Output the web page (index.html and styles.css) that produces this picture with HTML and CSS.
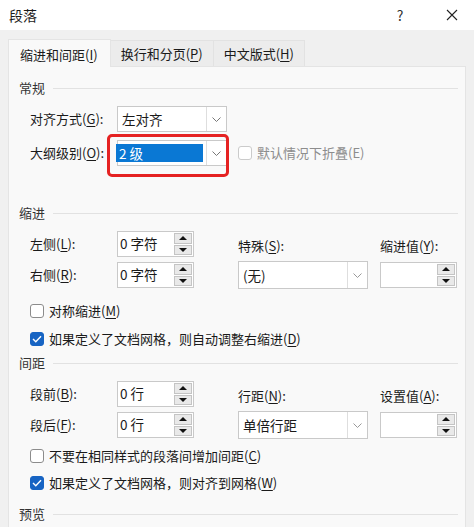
FILE: index.html
```html
<!DOCTYPE html>
<html lang="zh-CN">

<head>
    <meta charset="UTF-8">
    <meta name="viewport" content="width=device-width, initial-scale=1.0">
    <title>段落</title>

    <link rel="stylesheet" href="styles.css">
</head>

<body>
    <div class="titlebar">
        <span class="title">段落</span>
        <span class="help">?</span>
        <span class="close">
            <svg width="12" height="12" viewBox="0 0 12 12">
                <path d="M1 1L11 11M11 1L1 11" stroke="#222" stroke-width="1.1" fill="none"></path>
            </svg>
        </span>
    </div>

    <div class="dialog">
        <div class="tabs">
            <div class="tab active">缩进和间距(<u>I</u>)</div>
            <div class="tab">换行和分页(<u>P</u>)</div>
            <div class="tab">中文版式(<u>H</u>)</div>
        </div>

        <div class="panel">
            <!-- 常规 -->
            <div class="group_title">常规</div>
            <div class="general">
                <div class="row">
                    <span class="label">对齐方式(<u>G</u>):</span>
                    <div class="select short">
                        <span class="value">左对齐</span>
                        <span class="arrow"><svg width="9" height="5" viewBox="0 0 9 5"><path d="M0.5 0.5L4.5 4.5L8.5 0.5" stroke="#777" fill="none"></path></svg></span>
                    </div>
                </div>
                <div class="row">
                    <span class="label">大纲级别(<u>O</u>):</span>
                    <div class="select short marked">
                        <span class="value"><span class="selected">2 级</span></span>
                        <span class="arrow"><svg width="9" height="5" viewBox="0 0 9 5"><path d="M0.5 0.5L4.5 4.5L8.5 0.5" stroke="#777" fill="none"></path></svg></span>
                        <span class="highlight"></span>
                    </div>
                    <label class="check disabled"><span class="box"></span>默认情况下折叠(E)</label>
                </div>
            </div>

            <!-- 缩进 -->
            <div class="group_title">缩进</div>
            <div class="fields">
                <span class="label">左侧(<u>L</u>):</span>
                <div class="spin">
                    <span class="value">0 字符</span>
                    <span class="btns"><span class="up"></span><span class="down"></span></span>
                </div>
                <span class="label sub">特殊(<u>S</u>):</span>
                <span class="label sub">缩进值(<u>Y</u>):</span>

                <span class="label">右侧(<u>R</u>):</span>
                <div class="spin">
                    <span class="value">0 字符</span>
                    <span class="btns"><span class="up"></span><span class="down"></span></span>
                </div>
                <div class="select wide">
                    <span class="value">(无)</span>
                    <span class="arrow"><svg width="9" height="5" viewBox="0 0 9 5"><path d="M0.5 0.5L4.5 4.5L8.5 0.5" stroke="#999" fill="none"></path></svg></span>
                </div>
                <div class="spin">
                    <span class="value"></span>
                    <span class="btns"><span class="up"></span><span class="down"></span></span>
                </div>
            </div>
            <div class="checks first">
                <label class="check"><span class="box"></span>对称缩进(<u>M</u>)</label>
                <label class="check"><span class="box on"><svg width="10" height="8" viewBox="0 0 10 8"><path d="M1 4L3.8 6.8L9 1.2" stroke="#fff" stroke-width="1.4" fill="none"></path></svg></span>如果定义了文档网格，则自动调整右缩进(<u>D</u>)</label>
            </div>

            <!-- 间距 -->
            <div class="group_title tight">间距</div>
            <div class="fields">
                <span class="label">段前(<u>B</u>):</span>
                <div class="spin">
                    <span class="value">0 行</span>
                    <span class="btns"><span class="up"></span><span class="down"></span></span>
                </div>
                <span class="label sub">行距(<u>N</u>):</span>
                <span class="label sub">设置值(<u>A</u>):</span>

                <span class="label">段后(<u>F</u>):</span>
                <div class="spin">
                    <span class="value">0 行</span>
                    <span class="btns"><span class="up"></span><span class="down"></span></span>
                </div>
                <div class="select wide">
                    <span class="value">单倍行距</span>
                    <span class="arrow"><svg width="9" height="5" viewBox="0 0 9 5"><path d="M0.5 0.5L4.5 4.5L8.5 0.5" stroke="#999" fill="none"></path></svg></span>
                </div>
                <div class="spin">
                    <span class="value"></span>
                    <span class="btns"><span class="up"></span><span class="down"></span></span>
                </div>
            </div>
            <div class="checks">
                <label class="check"><span class="box"></span>不要在相同样式的段落间增加间距(<u>C</u>)</label>
                <label class="check"><span class="box on"><svg width="10" height="8" viewBox="0 0 10 8"><path d="M1 4L3.8 6.8L9 1.2" stroke="#fff" stroke-width="1.4" fill="none"></path></svg></span>如果定义了文档网格，则对齐到网格(<u>W</u>)</label>
            </div>

            <!-- 预览 -->
            <div class="group_title preview">预览</div>
        </div>
    </div>
</body>

</html>
```

FILE: styles.css
```css
* {
    margin: 0;
    padding: 0;
    box-sizing: border-box;
}

body {
    width: 474px;
    height: 527px;
    overflow: hidden;
    background-color: #f0f0f0;
    font-family: "Noto Sans CJK SC", "Noto Sans", sans-serif;
    font-size: 13px;
    color: #1a1a1a;
}

u {
    text-decoration: underline;
    text-underline-offset: 2px;
}

/* title bar */

.titlebar {
    height: 30px;
    background-color: #fff;
    display: flex;
    align-items: center;
    padding-left: 9px;
}

.title {
    font-size: 14px;
    flex: 1;
    line-height: 26px;
}

.help {
    width: 44px;
    margin-right: 8px;
    text-align: center;
    font-size: 14px;
    color: #333;
    line-height: 26px;
}

.close {
    width: 44px;
    display: flex;
    justify-content: center;
}

/* tabs */

.dialog {
    padding: 8px 8px 0 8px;
}

.tabs {
    display: flex;
    align-items: flex-end;
    height: 28px;
}

.tab {
    height: 26px;
    line-height: 25px;
    padding: 0 10px;
    background-color: #ececec;
    border: 1px solid #e2e2e2;
    border-bottom: none;
}

.tab + .tab {
    border-left: none;
}

.tab.active {
    height: 28px;
    line-height: 29px;
    padding: 0 12px 0 11px;
    background-color: #f9f9f9;
    border: 1px solid #e4e4e4;
    border-bottom: none;
    position: relative;
    z-index: 1;
    margin-bottom: -1px;
}

.panel {
    height: 462px;
    background-color: #f9f9f9;
    border: 1px solid #e4e4e4;
    border-bottom: none;
    padding: 11px 7px 0 10px;
}

/* group headers */

.group_title {
    display: flex;
    align-items: center;
    height: 20px;
    line-height: 20px;
    color: #333;
}

.group_title::after {
    content: "";
    flex: 1;
    height: 1px;
    background-color: #e2e2e2;
    margin-left: 8px;
}

.general + .group_title {
    margin-top: 37px;
}

.group_title.tight {
    margin-top: 4px;
}

.group_title.preview {
    margin-top: 11px;
}

/* rows */

.general {
    margin-top: 8px;
    padding-left: 11px;
    display: flex;
    flex-direction: column;
    gap: 8px;
}

.row {
    display: flex;
    align-items: center;
    height: 26px;
}

.label {
    width: 87px;
    line-height: 20px;
    white-space: nowrap;
}

.fields {
    margin-top: 8px;
    padding-left: 11px;
    display: grid;
    grid-template-columns: 87px 121px 142px 78px;
    grid-template-rows: 26px 26px;
    row-gap: 5px;
    align-items: center;
}

.label.sub {
    width: auto;
    padding-top: 3px;
}

/* select */

.select {
    display: flex;
    height: 26px;
    background-color: #fff;
    border: 1px solid #c9c9c9;
    position: relative;
}

.select.short {
    width: 110px;
}

.select.wide {
    width: 130px;
    height: 28px;
}

.select .value {
    flex: 1;
    display: flex;
    align-items: center;
    padding-left: 4px;
    line-height: 20px;
    font-size: 13.5px;
}

.select .arrow {
    width: 20px;
    display: flex;
    align-items: center;
    justify-content: center;
    border-left: 1px solid #dedede;
}

.select .selected {
    display: block;
    width: 100%;
    margin-left: -3px;
    padding-left: 3px;
    background-color: #0a78d4;
    color: #fff;
    line-height: 18px;
}

.select.marked .value {
    padding-left: 1px;
}

.highlight {
    position: absolute;
    left: -11px;
    top: -7px;
    width: 122px;
    height: 43px;
    border: 3px solid #e52222;
    border-radius: 5px;
}

/* spinner */

.spin {
    display: flex;
    width: 77px;
    height: 26px;
    background-color: #fff;
    border: 1px solid #c9c9c9;
}

.spin .value {
    flex: 1;
    padding-left: 2px;
    line-height: 23px;
    font-size: 13.5px;
}

.spin .btns {
    width: 19px;
    display: flex;
    flex-direction: column;
    gap: 1px;
    padding: 1px 1px 1px 0;
}

.spin .btns span {
    flex: 1;
    display: flex;
    align-items: center;
    justify-content: center;
    background-color: #e9e9e9;
    border: 1px solid #c4c4c4;
}

.spin .up::before {
    content: "";
    border-left: 4px solid transparent;
    border-right: 4px solid transparent;
    border-bottom: 4px solid #111;
}

.spin .down::before {
    content: "";
    border-left: 4px solid transparent;
    border-right: 4px solid transparent;
    border-top: 4px solid #111;
}

/* checkboxes */

.check {
    display: flex;
    align-items: center;
    height: 20px;
    line-height: 20px;
    white-space: nowrap;
}

.check .box {
    width: 14px;
    height: 14px;
    margin-right: 5px;
    background-color: #fff;
    border: 1px solid #8c8c8c;
    border-radius: 3px;
    display: flex;
    align-items: center;
    justify-content: center;
}

.check .box.on {
    background-color: #1764c3;
    border-color: #1764c3;
}

.check.disabled {
    color: #8d8d8d;
    margin-left: 11px;
}

.check.disabled .box {
    border-color: #cbcbcb;
}

.checks {
    margin-top: 8px;
    padding-left: 11px;
    display: flex;
    flex-direction: column;
    gap: 7px;
}

.checks.first {
    margin-top: 13px;
    gap: 8px;
}
```
